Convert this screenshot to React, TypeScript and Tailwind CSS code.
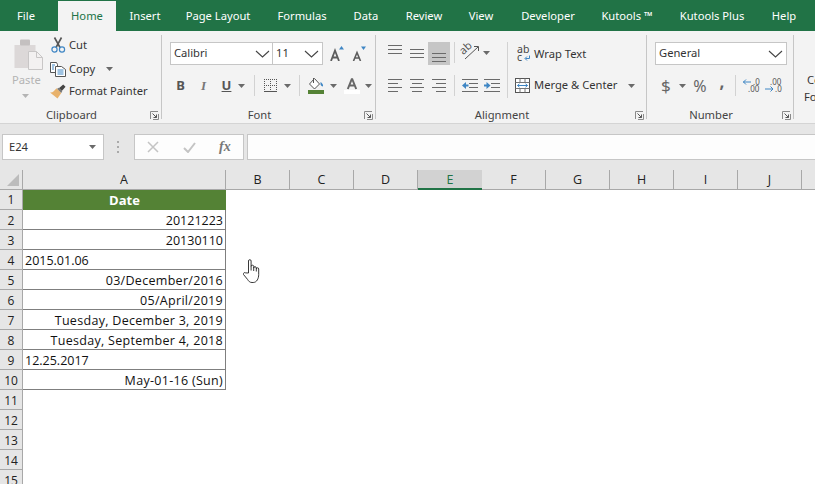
import type { ReactNode } from 'react';

const uiFont = "font-['Noto_Sans',sans-serif]";
const cellFont = "font-['Open_Sans',sans-serif]";

const tabs = [
  { label: 'File', w: 'w-[52px] mr-[6px]' },
  { label: 'Home', w: 'w-[58px]', active: true },
  { label: 'Insert', w: 'w-[58px]' },
  { label: 'Page Layout', w: 'w-[88px]' },
  { label: 'Formulas', w: 'w-[80px]' },
  { label: 'Data', w: 'w-[48px]' },
  { label: 'Review', w: 'w-[68px]' },
  { label: 'View', w: 'w-[46px]' },
  { label: 'Developer', w: 'w-[88px]' },
  { label: 'Kutools ™', w: 'w-[70px]' },
  { label: 'Kutools Plus', w: 'w-[100px]' },
  { label: 'Help', w: 'w-[44px]' },
];

const rows = [
  { n: 1, text: 'Date', kind: 'head' },
  { n: 2, text: '20121223', kind: 'right' },
  { n: 3, text: '20130110', kind: 'right' },
  { n: 4, text: '2015.01.06', kind: 'left' },
  { n: 5, text: '03/December/2016', kind: 'right', wide: true },
  { n: 6, text: '05/April/2019', kind: 'right', wide: true },
  { n: 7, text: 'Tuesday, December 3, 2019', kind: 'right', wide: true },
  { n: 8, text: 'Tuesday, September 4, 2018', kind: 'right', wide: true },
  { n: 9, text: '12.25.2017', kind: 'left' },
  { n: 10, text: 'May-01-16 (Sun)', kind: 'right', wide: true },
  { n: 11, text: '', kind: 'none' },
  { n: 12, text: '', kind: 'none' },
  { n: 13, text: '', kind: 'none' },
  { n: 14, text: '', kind: 'none' },
  { n: 15, text: '', kind: 'none' },
];

function Caret({ className = '' }: { className?: string }) {
  return (
    <svg width="7" height="4" viewBox="0 0 7 4" className={`shrink-0 ${className}`}>
      <path d="M0 0h7L3.500 4z" fill="#6a6a6a" />
    </svg>
  );
}

function Chevron() {
  return (
    <svg width="15" height="8" viewBox="0 0 15 8" className="shrink-0">
      <path d="M1 1l6.500 6L14 1" fill="none" stroke="#444" strokeWidth="1.100" />
    </svg>
  );
}

function Lines({ widths, align = 'left' }: { widths: number[]; align?: string }) {
  // little stacks of text lines for the alignment buttons
  const w = Math.max(...widths);
  return (
    <svg width={w} height={(widths.length - 1) * 4 + 1} className="shrink-0">
      {widths.map((l, i) => {
        const x = align === 'left' ? 0 : align === 'right' ? w - l : (w - l) / 2;
        return <rect key={i} x={x} y={i * 4} width={l} height="1" fill="#6a6a6a" />;
      })}
    </svg>
  );
}

function Launcher() {
  return (
    <svg width="9" height="9" viewBox="0 0 9 9" className="absolute right-[2px] top-[5px]">
      <path d="M0.500 8V0.500H8M8.500 3v5.500H3" fill="none" stroke="#8a8a8a" />
      <path d="M2.500 2.500l4 4M3.500 6.500h3v-3" fill="none" stroke="#555" />
    </svg>
  );
}

function Group({ w, label, children }: { w: string; label: string; children: ReactNode }) {
  return (
    <div className={`${w} shrink-0 flex flex-col h-[84px] border-r border-[#c6c6c6]`}>
      <div className="h-[71px] pt-[7px]">{children}</div>
      <div className="relative h-[13px] pr-[18px] text-center text-[11.2px] leading-[17px] text-[#444]">
        {label}
        <Launcher />
      </div>
    </div>
  );
}

function VSep({ className = '' }: { className?: string }) {
  return <div className={`w-px h-[21px] bg-[#d2d2d2] shrink-0 ${className}`} />;
}

function PasteIcon() {
  return (
    <svg width="29" height="31" viewBox="0 0 29 31">
      <path d="M0.500 6h7V3h7v3h7v23h-21z" fill="#dcd8d8" />
      <rect x="6" y="0.500" width="10" height="6" rx="1" fill="#c4c0c0" />
      <path d="M14.500 12.500h8l6 6v12h-14z" fill="#f3f1f1" stroke="#c8c6c6" />
      <path d="M22.500 12.500v6h6" fill="none" stroke="#c8c6c6" />
    </svg>
  );
}

function CutIcon() {
  return (
    <svg width="15" height="16" viewBox="0 0 15 16">
      <path d="M3.500 0.500l5.500 10M10.500 0.500L5 10.500" stroke="#555" strokeWidth="1.600" fill="none" />
      <circle cx="3.500" cy="12.500" r="2.600" fill="none" stroke="#3f86c4" strokeWidth="1.200" />
      <circle cx="11" cy="12.500" r="2.600" fill="none" stroke="#3f86c4" strokeWidth="1.200" />
    </svg>
  );
}

function CopyIcon() {
  return (
    <svg width="16" height="15" viewBox="0 0 16 15">
      <path d="M0.500 0.500h6l1 2v8h-7z" fill="#fff" stroke="#555" />
      <path d="M5.500 4.500h6l4 3v7h-10z" fill="#fff" stroke="#555" />
      <path d="M2 3h3M2 5h2M2 7h2" stroke="#3f86c4" />
      <path d="M7.500 8h6M7.500 10h6M7.500 12h6" stroke="#3f86c4" />
    </svg>
  );
}

function PainterIcon() {
  return (
    <svg width="17" height="15" viewBox="0 0 17 15">
      <path d="M7 4l5 5-4 6-8-6.500c3 .5 4.500-2 7-4.500z" fill="#e8b26c" />
      <path d="M9.500 4l3 3 4-4.500-2.500-2.500z" fill="#444" />
      <path d="M7.500 4.500l4.500 4.500 1-2-3.500-3.500z" fill="#777" />
    </svg>
  );
}

function FillIcon() {
  return (
    <svg width="17" height="17" viewBox="0 0 17 17">
      <path d="M6.500 1.500l5 5.500-5 5-5-5z" fill="#fff" stroke="#555" />
      <path d="M5.500 1v5" stroke="#555" />
      <path d="M12.500 5c1.500 1 3 2.500 2.500 4.500-1 0-2-1-2.500-2z" fill="#3f86c4" />
      <rect x="0" y="13" width="16" height="4" fill="#548235" />
    </svg>
  );
}

function FontColorIcon() {
  return (
    <svg width="16" height="17" viewBox="0 0 16 17">
      <path d="M8 1.500L3.800 12M8 1.500L12.200 12M5.200 8.500h5.600" fill="none" stroke="#666" strokeWidth="2" />
      <rect x="0" y="13" width="16" height="4" fill="#fff" />
    </svg>
  );
}

function BordersIcon() {
  return (
    <svg width="13" height="13" viewBox="0 0 13 13">
      <path d="M0 0.500h13M0 6.500h13M0.500 0v12M6.500 0v12M12.500 0v12" stroke="#555" strokeDasharray="1 1" fill="none" />
      <rect x="0" y="12" width="13" height="1" fill="#555" />
    </svg>
  );
}

function FontGrow({ up }: { up: boolean }) {
  return (
    <svg width="14" height="15" viewBox="0 0 14 15">
      {up ? (
        <>
          <path d="M1 15L5 4.500 9 15M2.500 11.500h5" fill="none" stroke="#5c5c5c" strokeWidth="1.800" />
          <path d="M9 3.500L11.500 0 14 3.500z" fill="#3f86c4" />
        </>
      ) : (
        <>
          <path d="M1.500 15L5 6.500 8.500 15M2.800 12h4.400" fill="none" stroke="#5c5c5c" strokeWidth="1.600" />
          <path d="M9 0.500h5L11.500 4z" fill="#3f86c4" />
        </>
      )}
    </svg>
  );
}

function OrientIcon() {
  return (
    <svg width="18" height="18" viewBox="0 0 18 18" className="overflow-visible">
      <path d="M3 17L16 5" stroke="#555" />
      <path d="M12 4.500h4.500V9" fill="none" stroke="#555" />
      <text x="-2" y="9" fontSize="11" fill="#555" transform="rotate(-42 5 7)" className="font-['Noto_Sans',sans-serif]">
        ab
      </text>
    </svg>
  );
}

function WrapIcon() {
  return (
    <svg width="14" height="17" viewBox="0 0 14 17" className="overflow-visible">
      <text x="0" y="8" fontSize="10.500" fill="#444" className="font-['Noto_Sans',sans-serif]">ab</text>
      <text x="0" y="16" fontSize="10.500" fill="#444" className="font-['Noto_Sans',sans-serif]">c</text>
      <path d="M12.500 10.500v3h-4M10 11.500l-2 2 2 2" fill="none" stroke="#3f86c4" />
    </svg>
  );
}

function IndentIcon({ out }: { out: boolean }) {
  return (
    <svg width="16" height="13" viewBox="0 0 16 13">
      {out ? (
        <>
          <path d="M0 0.500h16M7 4.500h9M7 8.500h9M0 12.500h16" stroke="#6a6a6a" />
          <path d="M0 6.500L4 3v2.500h2.500v2H4V10z" fill="#3f86c4" />
        </>
      ) : (
        <>
          <path d="M0 0.500h16M7 4.500h9M7 8.500h9M0 12.500h16" stroke="#6a6a6a" />
          <path d="M6.500 6.500L2.500 3v2.500H0v2h2.500V10z" fill="#3f86c4" />
        </>
      )}
    </svg>
  );
}

function MergeIcon() {
  return (
    <svg width="15" height="15" viewBox="0 0 15 15">
      <rect x="0.500" y="0.500" width="14" height="14" fill="#fff" stroke="#555" />
      <path d="M0.500 4.500h14M0.500 10.500h14M5 0.500v4M10 0.500v4M5 10.500v4M10 10.500v4" stroke="#777" />
      <path d="M2.500 7.500h10M4.500 5.800l-2 1.700 2 1.700M10.500 5.800l2 1.700-2 1.700" fill="none" stroke="#3f86c4" />
    </svg>
  );
}

function DecimalIcon({ more }: { more: boolean }) {
  const cls = "font-['Noto_Sans',sans-serif]";
  return (
    <svg width="18" height="15" viewBox="0 0 18 15" className="overflow-visible">
      {more ? (
        <>
          <path d="M0 4h8M3 1.500L0.500 4 3 6.500" fill="none" stroke="#3f86c4" />
          <text x="10" y="6.500" fontSize="8" fill="#555" className={cls}>.0</text>
          <text x="5" y="14" fontSize="8" fill="#555" className={cls}>.00</text>
        </>
      ) : (
        <>
          <text x="5" y="6.500" fontSize="8" fill="#555" className={cls}>.00</text>
          <path d="M0 11h8M5.500 8.500L8 11l-2.500 2.500" fill="none" stroke="#3f86c4" />
          <text x="10" y="14" fontSize="8" fill="#555" className={cls}>.0</text>
        </>
      )}
    </svg>
  );
}

function HandCursor() {
  return (
    <svg width="18" height="25" viewBox="0 0 18 25" className="absolute left-[243px] top-[259px]">
      <path
        d="M5.500 14V2a1.300 1.300 0 0 1 2.600 0V7.500a1.300 1.300 0 0 1 2.600 0V9a1.300 1.300 0 0 1 2.600 0V10a1.200 1.200 0 0 1 2.400 0v5.500c0 3.800-1.800 8-5.500 8H9c-2.200 0-3.300-1.200-4.400-3L0.500 15.500c-.7-1.200 1-2.600 2.200-1.600zM8.100 7.500v4M10.700 9v3M13.300 10v2.500"
        fill="#fff"
        stroke="#222"
        strokeWidth="0.900"
      />
    </svg>
  );
}

function Ribbon() {
  return (
    <div className={`flex h-[93px] pt-[4px] bg-[#f3f3f3] border-b border-[#d4d4d4] overflow-hidden text-[#444] ${uiFont}`}>
      <Group w="w-[162px]" label="Clipboard">
        <div className="flex -mt-[7px]">
          <div className="w-[50px] pl-[14px] pt-[4px] flex flex-col shrink-0">
            <PasteIcon />
            <div className="-ml-[2px] text-[11.2px] leading-[16px] text-[#b4b4b4] mt-[2px]">Paste</div>
            <div className="w-[23px] flex justify-center mt-[6px]">
              <svg width="7" height="4"><path d="M0 0h7L3.500 4z" fill="#b4b4b4" /></svg>
            </div>
          </div>
          <div className="flex flex-col text-[11.2px] text-[#333] -mt-px">
            <div className="h-[22px] flex items-center gap-[3px]">
              <div className="w-[16px] flex justify-center"><CutIcon /></div>
              <span>Cut</span>
            </div>
            <div className="h-[22px] mt-[2px] flex items-center gap-[3px]">
              <div className="w-[16px] flex justify-center"><CopyIcon /></div>
              <span className="w-[34px]">Copy</span>
              <Caret />
            </div>
            <div className="h-[22px] flex items-center gap-[3px]">
              <div className="w-[16px] flex justify-center"><PainterIcon /></div>
              <span className="whitespace-nowrap">Format Painter</span>
            </div>
          </div>
        </div>
      </Group>

      <Group w="w-[214px]" label="Font">
        <div className="flex items-center h-[23px] pl-[8px]">
          <div className="w-[103px] h-[23px] shrink-0 bg-white border border-[#c6c6c6] flex items-center justify-between pl-[3px] pr-[2px] text-[11.2px] text-[#333]">
            Calibri
            <Chevron />
          </div>
          <div className="w-[51px] h-[23px] shrink-0 -ml-px bg-white border border-[#c6c6c6] flex items-center justify-between pl-[3px] pr-[3px] text-[11.2px] text-[#333]">
            11
            <Chevron />
          </div>
          <div className="ml-[7px]"><FontGrow up /></div>
          <div className="ml-[8px]"><FontGrow up={false} /></div>
        </div>
        <div className="flex items-center h-[23px] mt-[9px] pl-[14px]">
          <div className="w-[9px] text-[13px] font-bold text-[#555] text-center leading-none">B</div>
          <div className="ml-[14px] w-[9px] text-[13px] italic font-bold text-[#777] text-center leading-none font-['Liberation_Serif',serif]">I</div>
          <div className="ml-[13px] w-[11px] text-[13px] font-bold text-[#555] text-center leading-none underline">U</div>
          <Caret className="ml-[6px]" />
          <VSep className="ml-[9px]" />
          <div className="ml-[9px]"><BordersIcon /></div>
          <Caret className="ml-[7px]" />
          <VSep className="ml-[8px]" />
          <div className="ml-[8px]"><FillIcon /></div>
          <Caret className="ml-[5px]" />
          <div className="ml-[7px]"><FontColorIcon /></div>
          <Caret className="ml-[5px]" />
        </div>
      </Group>

      <Group w="w-[271px]" label="Alignment">
        <div className="flex h-[56px]">
          <div className="w-[132px] shrink-0 border-r border-[#d2d2d2] pl-[12px] h-[56px]">
            <div className="flex h-[23px]">
              <div className="w-[22px] pt-[3px]"><Lines widths={[14, 14, 14]} /></div>
              <div className="w-[18px] pt-[7px]"><Lines widths={[14, 14, 14]} /></div>
              <div className="w-[22px] h-[23px] bg-[#c6c6c6] flex justify-center items-end pb-[3px]"><Lines widths={[14, 14, 14]} /></div>
              <VSep className="ml-[4px]" />
              <div className="ml-[7px]"><OrientIcon /></div>
              <Caret className="ml-[3px] mt-[9px]" />
            </div>
            <div className="flex h-[23px] mt-[9px] items-center">
              <div className="w-[22px]"><Lines widths={[14, 10, 14, 10]} /></div>
              <div className="w-[22px]"><Lines widths={[14, 10, 14, 10]} align="center" /></div>
              <div className="w-[22px]"><Lines widths={[14, 10, 14, 10]} align="right" /></div>
              <VSep />
              <div className="ml-[7px]"><IndentIcon out /></div>
              <div className="ml-[6px]"><IndentIcon out={false} /></div>
            </div>
          </div>
          <div className="pl-[7px] text-[11.2px] text-[#333] flex-1">
            <div className="h-[23px] flex items-center">
              <div className="w-[19px] pl-[2px]"><WrapIcon /></div>
              <span className="mt-px">Wrap Text</span>
            </div>
            <div className="h-[23px] mt-[9px] flex items-center">
              <MergeIcon />
              <span className="ml-[4px] w-[94px] whitespace-nowrap">Merge &amp; Center</span>
              <Caret />
            </div>
          </div>
        </div>
      </Group>

      <Group w="w-[147px]" label="Number">
        <div className="pl-[8px]">
          <div className="w-[132px] h-[23px] bg-white border border-[#c6c6c6] flex items-center justify-between pl-[3px] pr-[3px] text-[11.2px] text-[#333]">
            General
            <Chevron />
          </div>
          <div className="flex items-center h-[23px] mt-[9px]">
            <div className="ml-[6px] w-[12px] text-[17px] text-[#666] leading-none">$</div>
            <Caret className="ml-[6px]" />
            <div className="ml-[2px] w-[24px] text-center text-[16px] text-[#666] leading-none">%</div>
            <div className="ml-[5px] w-[10px] text-center text-[17px] font-bold text-[#666] leading-none -mt-[9px]">,</div>
            <VSep className="ml-[8px]" />
            <div className="ml-[7px]"><DecimalIcon more /></div>
            <div className="ml-[4px]"><DecimalIcon more={false} /></div>
          </div>
        </div>
      </Group>

      <div className="pl-[10px] pt-[36px] text-[11.2px] leading-[17px] text-[#333] whitespace-nowrap">
        <div className="pl-[3px]">Conditional</div>
        <div>Formatting</div>
      </div>
    </div>
  );
}

function FormulaBar() {
  return (
    <div className={`flex h-[46px] pt-[10px] bg-[#e6e6e6] overflow-hidden ${uiFont}`}>
      <div className="ml-[2px] w-[102px] h-[26px] shrink-0 bg-white border border-[#c6c6c6] flex items-center justify-between pl-[6px] pr-[7px] text-[11.2px] text-[#333]">
        E24
        <Caret />
      </div>
      <div className="ml-[13px] w-[3px] shrink-0 flex flex-col gap-[3px] justify-center h-[26px]">
        <div className="h-[2px] w-[2px] bg-[#aaa]" />
        <div className="h-[2px] w-[2px] bg-[#aaa]" />
        <div className="h-[2px] w-[2px] bg-[#aaa]" />
      </div>
      <div className="ml-[14px] w-[110px] h-[26px] shrink-0 bg-[#fdfdfd] border border-[#c6c6c6] flex items-center">
        <svg width="12" height="12" viewBox="0 0 12 12" className="ml-[12px] shrink-0">
          <path d="M1 1l10 10M11 1L1 11" stroke="#c4c4c4" strokeWidth="1.500" />
        </svg>
        <svg width="13" height="11" viewBox="0 0 13 11" className="ml-[24px] shrink-0">
          <path d="M1 6l4 4 7-9" fill="none" stroke="#c4c4c4" strokeWidth="2" />
        </svg>
        <span className="ml-[23px] text-[14px] italic font-bold text-[#777] leading-none font-['Liberation_Serif',serif]">fx</span>
      </div>
      <div className="ml-[3px] w-[580px] h-[26px] shrink-0 bg-[#fdfdfd] border border-[#c6c6c6]" />
    </div>
  );
}

function ColumnHeaders() {
  const cols = ['B', 'C', 'D', 'E', 'F', 'G', 'H', 'I', 'J', ''];
  return (
    <div className={`flex h-[20px] bg-[#e6e6e6] overflow-hidden text-[12.5px] leading-[20px] text-[#222] ${cellFont}`}>
      <div className="w-[23px] shrink-0 h-[20px] border-r border-b border-[#a8a8a8] flex items-end justify-end pr-[3px] pb-[3px]">
        <svg width="12" height="12" viewBox="0 0 12 12">
          <path d="M12 0v12H0z" fill="#bcbcbc" />
        </svg>
      </div>
      <div className="w-[203px] shrink-0 h-[20px] text-center border-r border-b border-[#a8a8a8]">A</div>
      {cols.map((c) =>
        c === 'E' ? (
          <div key={c} className="w-[64px] shrink-0 h-[20px] text-center bg-[#d2d2d2] text-[#217346] border-b-2 border-[#217346]">
            {c}
          </div>
        ) : (
          <div key={c} className="w-[64px] shrink-0 h-[20px] text-center border-r border-b border-[#a8a8a8]">
            {c}
          </div>
        ),
      )}
    </div>
  );
}

function Sheet() {
  return (
    <div className={`bg-white ${cellFont}`}>
      {rows.map((r) => (
        <div key={r.n} className="flex h-[20px]">
          <div className={`w-[23px] shrink-0 bg-[#e6e6e6] border-r border-b border-[#a8a8a8] text-center text-[12px] text-[#222] ${r.n === 1 ? 'leading-[20px]' : 'leading-[21px]'}`}>
            {r.n}
          </div>
          {r.kind === 'head' && (
            <div className="w-[203px] shrink-0 bg-[#548235] text-white text-center font-bold text-[13px] leading-[20px]">{r.text}</div>
          )}
          {r.kind === 'right' && (
            <div className={`w-[203px] shrink-0 border-r border-b border-[#7f7f7f] text-right pr-[2px] text-[12.5px] leading-[21px] text-[#111] whitespace-nowrap ${r.wide ? 'tracking-[0.3px]' : ''}`}>
              {r.text}
            </div>
          )}
          {r.kind === 'left' && (
            <div className="w-[203px] shrink-0 border-r border-b border-[#7f7f7f] pl-[2px] text-[12.5px] leading-[21px] text-[#111]">{r.text}</div>
          )}
        </div>
      ))}
    </div>
  );
}

export default function App() {
  return (
    <div className="relative w-[815px] h-[484px] overflow-hidden bg-white">
      <div className={`flex h-[31px] pt-px bg-[#217346] text-[11.2px] text-white ${uiFont}`}>
        {tabs.map((t) => (
          <div
            key={t.label}
            className={`${t.w} shrink-0 text-center leading-[30px] whitespace-nowrap ${t.active ? 'bg-[#f3f3f3] text-[#217346]' : ''}`}
          >
            {t.label}
          </div>
        ))}
      </div>
      <Ribbon />
      <FormulaBar />
      <ColumnHeaders />
      <Sheet />
      <HandCursor />
    </div>
  );
}
